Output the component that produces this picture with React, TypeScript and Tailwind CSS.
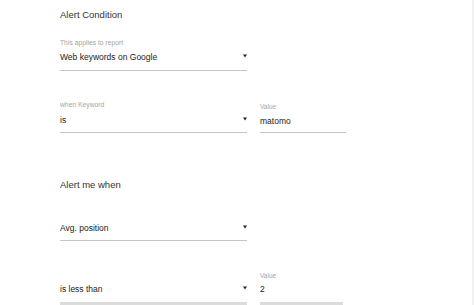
import React from "react";

function Arrow() {
  return (
    <svg width="4" height="4" viewBox="0 0 4 4" className="mt-[2px] shrink-0">
      <polygon points="0,0.5 4,0.5 2,3.5" fill="#222" />
    </svg>
  );
}

function Select({ value, line }: { value: string; line: string }) {
  return (
    <div className={"w-[187px] flex justify-between items-start " + line}>
      <span className="text-[8.5px] leading-[10px] text-[#222]">{value}</span>
      <Arrow />
    </div>
  );
}

function Value({ value, line, gap }: { value: string; line: string; gap: string }) {
  return (
    <div className="ml-[13px]">
      <div className={"text-[6.5px] leading-[8px] text-[#a5a5a5] " + gap}>Value</div>
      <div className={"text-[8.5px] leading-[10px] text-[#222] " + line}>{value}</div>
    </div>
  );
}

export default function App() {
  return (
    <div className="w-[474px] h-[305px] overflow-hidden bg-white flex font-['Liberation_Sans',Arial,sans-serif]">
      <div className="flex-1 pl-[60px] pt-[9px]">
        <h2 className="text-[9.5px] leading-[12px] text-[#333]">Alert Condition</h2>

        <div className="mt-[18px]">
          <div className="text-[6.75px] leading-[8px] text-[#a5a5a5] mb-[5px]">This applies to report</div>
          <Select value="Web keywords on Google" line="pb-[8px] border-b border-[#c4c4c4]" />
        </div>

        <div className="mt-[30px] flex items-end">
          <div>
            <div className="text-[6.75px] leading-[8px] text-[#a5a5a5] mb-[6px]">when Keyword</div>
            <Select value="is" line="pb-[7px] border-b border-[#c4c4c4]" />
          </div>
          <Value value="matomo" gap="mb-[5px]" line="pb-[6px] w-[86px] border-b border-[#c4c4c4]" />
        </div>

        <h2 className="mt-[46px] text-[9.5px] leading-[12px] text-[#333]">Alert me when</h2>

        <div className="mt-[32px]">
          <Select value="Avg. position" line="pb-[7px] border-b border-[#c4c4c4]" />
        </div>

        <div className="mt-[31px] flex items-end">
          <Select value="is less than" line="pb-[8px] border-b-4 border-[#dcdcdc]" />
          <Value value="2" gap="mb-[4px]" line="pb-[8px] w-[83px] border-b-4 border-[#dcdcdc]" />
        </div>
      </div>
      <div className="w-[2px] bg-[#f1f1f1]" />
    </div>
  );
}
